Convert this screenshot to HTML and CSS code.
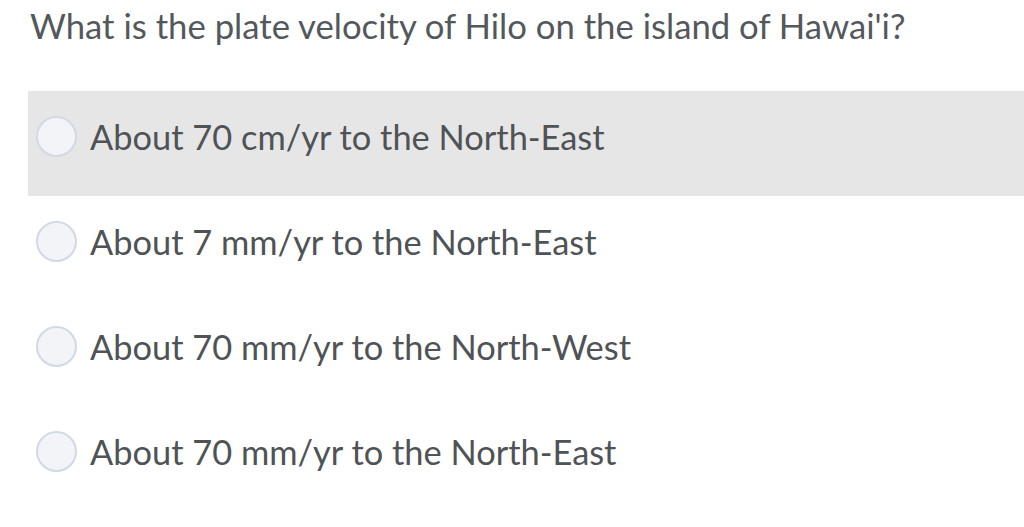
FILE: index.html
```html
<!DOCTYPE html>
<html>
<head>
<meta charset="utf-8">
<link rel="stylesheet" href="styles.css">
</head>
<body>
<div class="quiz">
  <h1 class="question">What is the plate velocity of Hilo on the island of Hawai'i?</h1>
  <ul class="options">
    <li class="option hover"><span class="radio"></span><span class="label">About 70 cm/yr to the North-East</span></li>
    <li class="option"><span class="radio"></span><span class="label">About 7 mm/yr to the North-East</span></li>
    <li class="option"><span class="radio"></span><span class="label">About 70 mm/yr to the North-West</span></li>
    <li class="option"><span class="radio"></span><span class="label">About 70 mm/yr to the North-East</span></li>
  </ul>
</div>
</body>
</html>
```
FILE: styles.css
```css
html, body {
  margin: 0;
  padding: 0;
  background: #ffffff;
}
body {
  font-family: Lato, "Open Sans", sans-serif;
  color: #525659;
}
.quiz {
  padding-left: 28px;
}
.question {
  margin: 0;
  padding: 4px 0 0 2px;
  font-size: 34.7px;
  font-weight: 400;
  line-height: 44px;
  height: 91px;
  box-sizing: border-box;
  color: #54585c;
}
.options {
  list-style: none;
  margin: 0;
  padding: 0;
}
.option {
  display: flex;
  align-items: center;
  height: 105px;
  box-sizing: border-box;
  padding: 0 0 14px 8px;
}
.option.hover {
  background: #e6e6e6;
}
.radio {
  width: 41px;
  height: 41px;
  box-sizing: border-box;
  border-radius: 50%;
  border: 2px solid #d1d9e4;
  background: #f2f4f7;
  flex: none;
}
.label {
  margin-left: 13px;
  font-size: 34.4px;
  line-height: 44px;
  color: #4f5356;
}
```
